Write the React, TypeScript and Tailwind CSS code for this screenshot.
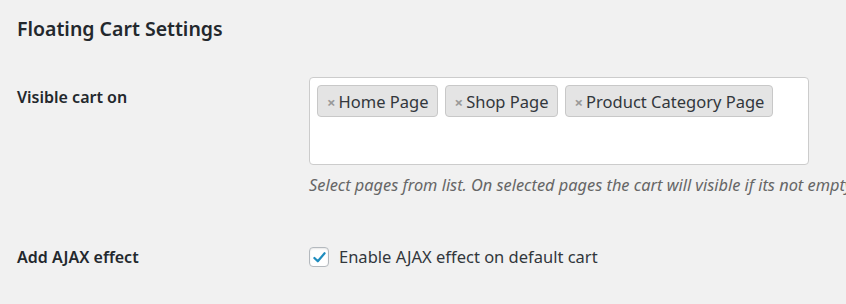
import React from "react";

const tags = ["Home Page", "Shop Page", "Product Category Page"];

export default function App() {
  return (
    <div
      className="w-[846px] h-[304px] overflow-hidden bg-[#f1f1f1] text-[#23282d] pl-[17px]"
      style={{ fontFamily: '"Noto Sans", "Open Sans", sans-serif' }}
    >
      {/* Section title */}
      <h2 className="pt-[15px] text-[19.5px] font-semibold leading-[28px]">Floating Cart Settings</h2>

      {/* Visible cart on */}
      <div className="mt-[34px] flex">
        <div className="w-[292px] shrink-0 pt-[9px] text-[16px] font-semibold leading-[22px]">Visible cart on</div>
        <div className="flex flex-col">
          <div className="w-[500px] h-[88px] bg-white border border-[#ccc] rounded-[4px] px-[7px] pt-[7px] flex items-start gap-[7px]">
            {tags.map((t) => (
              <span
                key={t}
                className="h-[32px] flex items-center pt-[2px] pl-[9px] pr-[8px] bg-[#e4e4e4] border border-[#c8c8c8] rounded-[4px] text-[16.5px] text-[#32373c] whitespace-nowrap"
              >
                <span className="text-[#999] text-[15px] mr-[3px] font-bold">×</span>
                {t}
              </span>
            ))}
          </div>
          <p className="mt-[9px] text-[16.35px] italic text-[#666] whitespace-nowrap leading-[22px]">
            Select pages from list. On selected pages the cart will visible if its not empty.
          </p>
        </div>
      </div>

      {/* Add AJAX effect */}
      <div className="mt-[49px] flex items-center">
        <div className="w-[292px] shrink-0 text-[16px] font-semibold leading-[22px]">Add AJAX effect</div>
        <label className="flex items-center gap-[10px] text-[16.5px] text-[#32373c]">
          <span className="w-[20px] h-[20px] bg-white border border-[#b4b9be] rounded-[4px] flex items-center justify-center shadow-[inset_0_1px_2px_rgba(0,0,0,0.1)]">
            <svg viewBox="0 0 20 20" className="w-[17px] h-[17px]">
              <path d="M4 10.5 L8 14.5 L16 5" fill="none" stroke="#1e8cbe" strokeWidth="2.6" strokeLinecap="round" strokeLinejoin="round" />
            </svg>
          </span>
          Enable AJAX effect on default cart
        </label>
      </div>
    </div>
  );
}
